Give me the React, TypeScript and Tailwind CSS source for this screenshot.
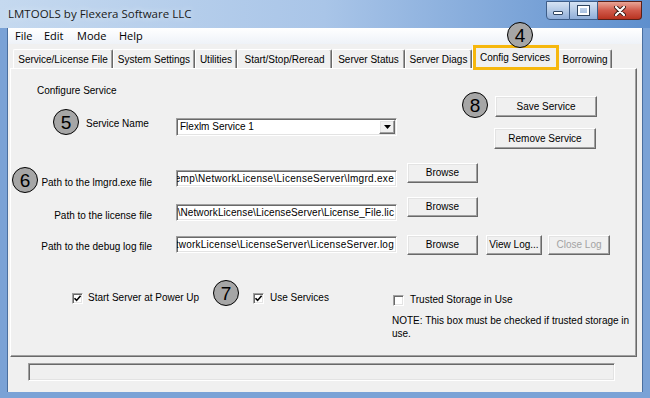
import React from "react";

const sans = "font-['Liberation_Sans',Arial,sans-serif]";
const seg = "font-['Open_Sans','Noto_Sans',sans-serif]";

const raised =
  "border border-t-white border-l-white border-r-[#696969] border-b-[#696969] shadow-[inset_-1px_-1px_0_#a0a0a0,inset_1px_1px_0_#e3e3e3] bg-[#f0f0f0]";
const sunken =
  "border border-t-[#a0a0a0] border-l-[#a0a0a0] border-r-white border-b-white shadow-[inset_1px_1px_0_#696969,inset_-1px_-1px_0_#e3e3e3]";

const tabs = [
  { label: "Service/License File", w: "w-[100px]" },
  { label: "System Settings", w: "w-[82px]" },
  { label: "Utilities", w: "w-[42px]" },
  { label: "Start/Stop/Reread", w: "w-[95px]" },
  { label: "Server Status", w: "w-[73px]" },
  { label: "Server Diags", w: "w-[67px]" },
  { label: "Config Services", w: "w-[86px]", active: true },
  { label: "Borrowing", w: "w-[54px]" },
];

// the edit boxes are scrolled to the end, so only the tail of each path shows
const paths = [
  {
    label: "Path to the lmgrd.exe file",
    value: "emp\\NetworkLicense\\LicenseServer\\lmgrd.exe",
    row: "mt-[14px]",
    lab: "mt-[14px]",
    inp: "mt-[7px]",
    track: "tracking-[0.3px]",
  },
  {
    label: "Path to the license file",
    value: "\\NetworkLicense\\LicenseServer\\License_File.lic",
    row: "mt-[8px]",
    lab: "mt-[13px]",
    inp: "mt-[7px]",
    track: "tracking-[0.1px]",
  },
  {
    label: "Path to the debug log file",
    value: "tworkLicense\\LicenseServer\\LicenseServer.log",
    row: "mt-[13px]",
    lab: "mt-[6px]",
    inp: "mt-[1px]",
    track: "tracking-[0.25px]",
    log: true,
  },
];

function Badge({ n, pos }: { n: number; pos: string }) {
  return (
    <div
      className={`absolute z-20 flex h-[26px] w-[26px] items-center justify-center rounded-full border-[1.5px] border-black bg-[#a6a6a6] text-[19px] leading-none text-black ${sans} ${pos}`}
    >
      {n}
    </div>
  );
}

function Check({ on }: { on?: boolean }) {
  return (
    <div className={`flex h-[11px] w-[11px] shrink-0 items-center justify-center bg-white ${sunken}`}>
      {on && (
        <svg width="9" height="9" viewBox="0 0 9 9">
          <path d="M1.5 4.2 L3.6 6.4 L7.6 1.8" fill="none" stroke="#000" strokeWidth="1.6" />
        </svg>
      )}
    </div>
  );
}

function Btn({ children, cls, disabled }: { children: React.ReactNode; cls: string; disabled?: boolean }) {
  return (
    <div
      className={`flex shrink-0 items-center justify-center whitespace-nowrap text-[10px] ${raised} ${cls} ${
        disabled ? "text-[#a3a3a3]" : "text-black"
      }`}
    >
      {children}
    </div>
  );
}

export default function App() {
  return (
    <div className={`relative flex h-[398px] w-[650px] flex-col overflow-hidden bg-[#7aa2d6] ${sans}`}>
      {/* title bar */}
      <div className="flex h-[28px] shrink-0 items-start bg-gradient-to-r from-[#c5d9ef] via-[#a9c5e8] to-[#5e8fcd]">
        <span className={`ml-[8px] mt-[5px] text-[11.5px] text-[#1a1a1a] [text-shadow:0_0_6px_#e8f1fb] ${seg}`}>
          LMTOOLS by Flexera Software LLC
        </span>
        <div className="ml-auto mr-[8px] mt-[1px] flex">
          <div className="flex h-[19px] w-[24px] items-center justify-center rounded-bl-[4px] border border-[#3d5d88] bg-gradient-to-b from-[#d6e3f3] via-[#b3c9e6] to-[#8fadd8]">
            <div className="mt-[5px] h-[4px] w-[10px] rounded-[1px] border border-[#2f4561] bg-white" />
          </div>
          <div className="flex h-[19px] w-[28px] items-center justify-center border-y border-r border-[#3d5d88] bg-gradient-to-b from-[#d6e3f3] via-[#b3c9e6] to-[#8fadd8]">
            <div className="h-[9px] w-[11px] border-[2px] border-white outline outline-1 outline-[#2f4561]" />
          </div>
          <div className="flex h-[19px] w-[44px] items-center justify-center rounded-br-[4px] border-y border-r border-[#5a2018] bg-gradient-to-b from-[#e8a597] via-[#d0594a] to-[#b8321f]">
            <svg width="12" height="10" viewBox="0 0 12 10">
              <path d="M2 1 L10 9 M10 1 L2 9" stroke="#3a1a14" strokeWidth="4" strokeLinecap="round" />
              <path d="M2 1 L10 9 M10 1 L2 9" stroke="#fff" strokeWidth="2.2" strokeLinecap="round" />
            </svg>
          </div>
        </div>
      </div>

      {/* client area */}
      <div className="mx-[7px] mb-[6px] flex flex-1 flex-col border-x border-[#4a6f9f] bg-[#f0f0f0]">
        {/* menu */}
        <div className={`flex h-[16px] shrink-0 items-center bg-gradient-to-b from-white to-[#eef2f8] text-[11px] text-black ${seg}`}>
          <span className="ml-[7px] w-[29px]">File</span>
          <span className="w-[33px]">Edit</span>
          <span className="w-[42px]">Mode</span>
          <span>Help</span>
        </div>

        {/* tabs */}
        <div className="flex h-[24px] shrink-0 items-end pl-[5px]">
          {tabs.map((t) =>
            t.active ? (
              <div
                key={t.label}
                className={`relative z-10 -mb-[1px] flex h-[23px] items-center justify-center rounded-t-[2px] border-l border-r border-t border-l-white border-r-[#696969] border-t-white bg-[#f0f0f0] pb-[2px] text-[10px] text-black shadow-[inset_-1px_0_0_#a0a0a0] ${t.w}`}
              >
                {t.label}
              </div>
            ) : (
              <div
                key={t.label}
                className={`flex h-[19px] items-center justify-center rounded-t-[2px] border-l border-r border-t border-l-white border-r-[#696969] border-t-white pt-[1px] text-[10px] text-black shadow-[inset_-1px_0_0_#a0a0a0] ${t.w}`}
              >
                {t.label}
              </div>
            )
          )}
        </div>

        {/* panel */}
        <div className="ml-[2px] mr-[5px] flex h-[289px] shrink-0 flex-col border border-b-[#696969] border-l-white border-r-[#696969] border-t-white text-[10px] leading-[12px] text-black shadow-[inset_-1px_-1px_0_#a0a0a0]">
          <div className="flex items-start">
            <div className="w-[473px]">
              <p className="ml-[26px] mt-[16px]">Configure Service</p>
              <div className="mt-[21px] flex items-start">
                <span className="ml-[75px] w-[90px] whitespace-nowrap">Service Name</span>
                <div className={`flex h-[18px] w-[221px] items-center bg-white ${sunken}`}>
                  <span className="pl-[3px]">Flexlm Service 1</span>
                  <div className={`ml-auto mr-[1px] flex h-[14px] w-[16px] items-center justify-center ${raised}`}>
                    <svg width="7" height="4" viewBox="0 0 7 4">
                      <path d="M0 0 H7 L3.5 4 Z" fill="#000" />
                    </svg>
                  </div>
                </div>
              </div>
            </div>
            <div className="flex flex-col items-start">
              <Btn cls="mt-[27px] ml-[11px] h-[21px] w-[102px]">Save Service</Btn>
              <Btn cls="mt-[11px] ml-[10px] h-[21px] w-[102px]">Remove Service</Btn>
            </div>
          </div>

          {paths.map((p) => (
            <div key={p.label} className={`flex items-start ${p.row}`}>
              <span className={`w-[141px] shrink-0 whitespace-nowrap text-right ${p.lab}`}>{p.label}</span>
              <div
                className={`ml-[24px] flex h-[17px] w-[221px] shrink-0 items-center justify-end overflow-hidden whitespace-nowrap bg-white pr-[2px] ${sunken} ${p.inp}`}
              >
                <span className={`shrink-0 ${p.track}`}>{p.value}</span>
              </div>
              <Btn cls="ml-[10px] h-[20px] w-[71px]">Browse</Btn>
              {p.log && (
                <>
                  <Btn cls="ml-[8px] h-[20px] w-[56px]">View Log...</Btn>
                  <Btn cls="ml-[6px] h-[20px] w-[62px]" disabled>
                    Close Log
                  </Btn>
                </>
              )}
            </div>
          ))}

          <div className="mt-[37px] flex items-start">
            <div className="flex w-[242px] items-center pl-[61px]">
              <Check on />
              <span className="ml-[5px]">Start Server at Power Up</span>
            </div>
            <div className="flex w-[140px] items-center">
              <Check on />
              <span className="ml-[6px]">Use Services</span>
            </div>
            <div className="flex flex-col">
              <div className="mt-[2px] flex items-center">
                <Check />
                <span className="ml-[6px]">Trusted Storage in Use</span>
              </div>
              <p className="-ml-[1px] mt-[8px] whitespace-nowrap leading-[13px]">
                NOTE: This box must be checked if trusted storage in
                <br />
                use.
              </p>
            </div>
          </div>
        </div>

        {/* status bar */}
        <div className="flex-1">
          <div className={`ml-[20px] mt-[6px] h-[18px] w-[587px] ${sunken}`} />
        </div>
      </div>

      {/* annotation overlays */}
      <div className="absolute left-[473px] top-[45px] z-20 h-[25px] w-[86px] border-[3px] border-[#f6b70d]" />
      <Badge n={4} pos="left-[507px] top-[22px]" />
      <Badge n={5} pos="left-[53px] top-[109px]" />
      <Badge n={6} pos="left-[12px] top-[167px]" />
      <Badge n={7} pos="left-[213px] top-[280px]" />
      <Badge n={8} pos="left-[462px] top-[92px]" />
    </div>
  );
}
